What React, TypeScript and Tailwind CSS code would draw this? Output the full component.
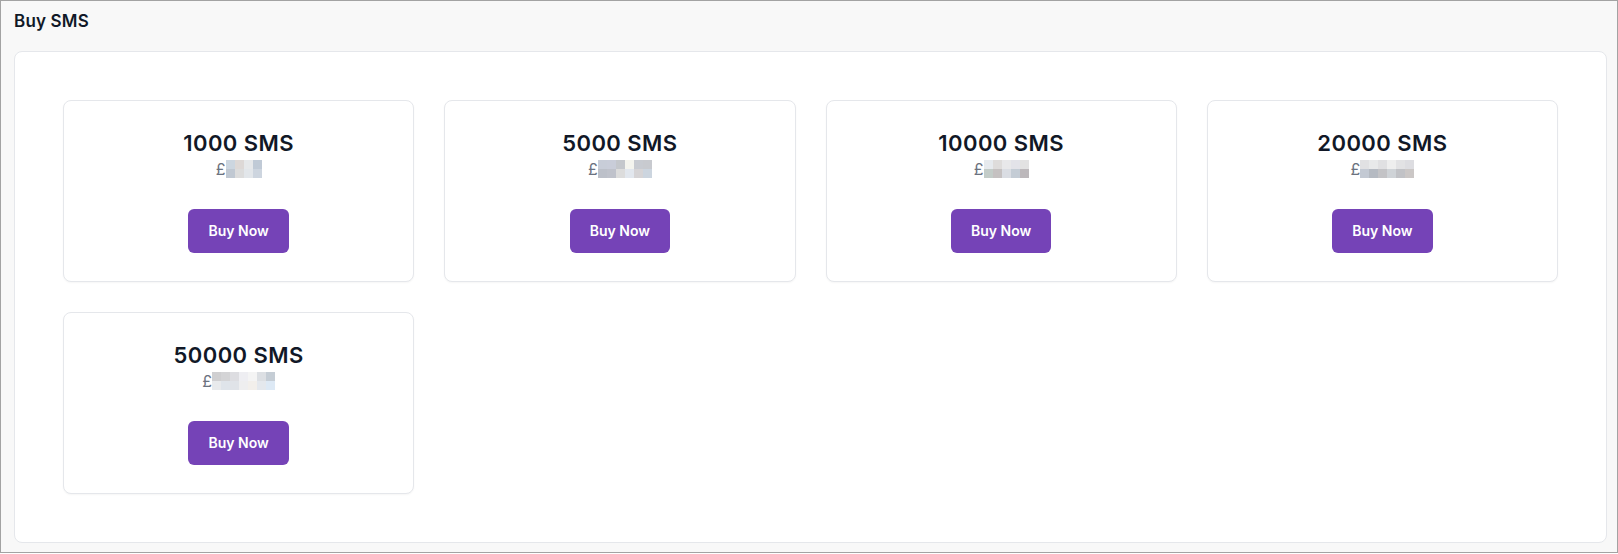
const packages = [
  {
    amount: "1000 SMS",
    mosaic: [
      ["bg-[#ccd6e0]", "bg-[#ddd8d6]", "bg-[#e6e8ea]", "bg-[#c0cad6]"],
      ["bg-[#c0c8d2]", "bg-[#dcdcdc]", "bg-[#e2e6ea]", "bg-[#cdd5df]"],
    ],
  },
  {
    amount: "5000 SMS",
    mosaic: [
      ["bg-[#c8cdd8]", "bg-[#c9cdd9]", "bg-[#c4c7cc]", "bg-[#f4f4ee]", "bg-[#c8cbd1]", "bg-[#c8cacf]"],
      ["bg-[#bcc0c9]", "bg-[#bfc2cb]", "bg-[#dcdcdc]", "bg-[#e2e7ee]", "bg-[#d6d4d6]", "bg-[#ccd5df]"],
    ],
  },
  {
    amount: "10000 SMS",
    mosaic: [
      ["bg-[#e6eaee]", "bg-[#dedcdb]", "bg-[#e8e8ea]", "bg-[#e3e3e9]", "bg-[#e2e2e2]"],
      ["bg-[#c3ccc8]", "bg-[#c5c1c1]", "bg-[#dadde3]", "bg-[#c4ccd5]", "bg-[#bcb8bb]"],
    ],
  },
  {
    amount: "20000 SMS",
    mosaic: [
      ["bg-[#e1e1e3]", "bg-[#e8e9ea]", "bg-[#e0e0e2]", "bg-[#eeeeee]", "bg-[#e2e2e4]", "bg-[#dddde1]"],
      ["bg-[#c3c9d3]", "bg-[#b5bac2]", "bg-[#c3c3c6]", "bg-[#cfd3d7]", "bg-[#c1c2c6]", "bg-[#cbc7c6]"],
    ],
  },
  {
    amount: "50000 SMS",
    mosaic: [
      ["bg-[#cfcfd1]", "bg-[#d4d4d6]", "bg-[#dddde1]", "bg-[#eeeef2]", "bg-[#f4f4f4]", "bg-[#dcdfe3]", "bg-[#c5cdd5]"],
      ["bg-[#e8eaec]", "bg-[#dfe4ea]", "bg-[#e0e3e8]", "bg-[#eeeeef]", "bg-[#f2efeb]", "bg-[#e4e8ed]", "bg-[#dde9f5]"],
    ],
  },
];

// blurred price, shown as a pixel mosaic like the redacted screenshot
const PriceMosaic = ({ rows }: { rows: string[][] }) => (
  <div className="flex flex-col">
    {rows.map((row, i) => (
      <div key={i} className="flex">
        {row.map((c, j) => (
          <span key={j} className={`block h-[9px] w-[9px] ${c}`} />
        ))}
      </div>
    ))}
  </div>
);

const App = () => {
  return (
    <div className="min-h-screen bg-white font-['Inter',sans-serif]">
      <div className="border border-[#a3a3a3] bg-[#f8f8f8] pb-[9px] pl-[13px] pr-[10px] pt-2">
        {/* Header */}
        <h1 className="mb-[18px] text-[17px] font-semibold leading-6 tracking-[0.01em] text-[#111827]">
          Buy SMS
        </h1>

        {/* Panel */}
        <div className="rounded-lg border border-[#e5e7eb] bg-white p-12">
          <div className="grid grid-cols-4 gap-[30px]">
            {packages.map((pkg) => (
              <div
                key={pkg.amount}
                className="flex flex-col items-center rounded-lg border border-[#e5e7eb] bg-white p-7 shadow-[0_1px_2px_rgba(0,0,0,0.04)]"
              >
                <h3 className="text-[22px] font-semibold leading-7 tracking-[0.02em] text-[#111827]">
                  {pkg.amount}
                </h3>
                <div className="flex h-6 items-center text-base text-[#6b7280]">
                  <span>£</span>
                  <PriceMosaic rows={pkg.mosaic} />
                </div>
                <button className="mt-7 rounded-md bg-[#7543b7] px-5 py-3 text-sm font-semibold leading-5 text-white">
                  Buy Now
                </button>
              </div>
            ))}
          </div>
        </div>
      </div>
    </div>
  );
};

export default App;
